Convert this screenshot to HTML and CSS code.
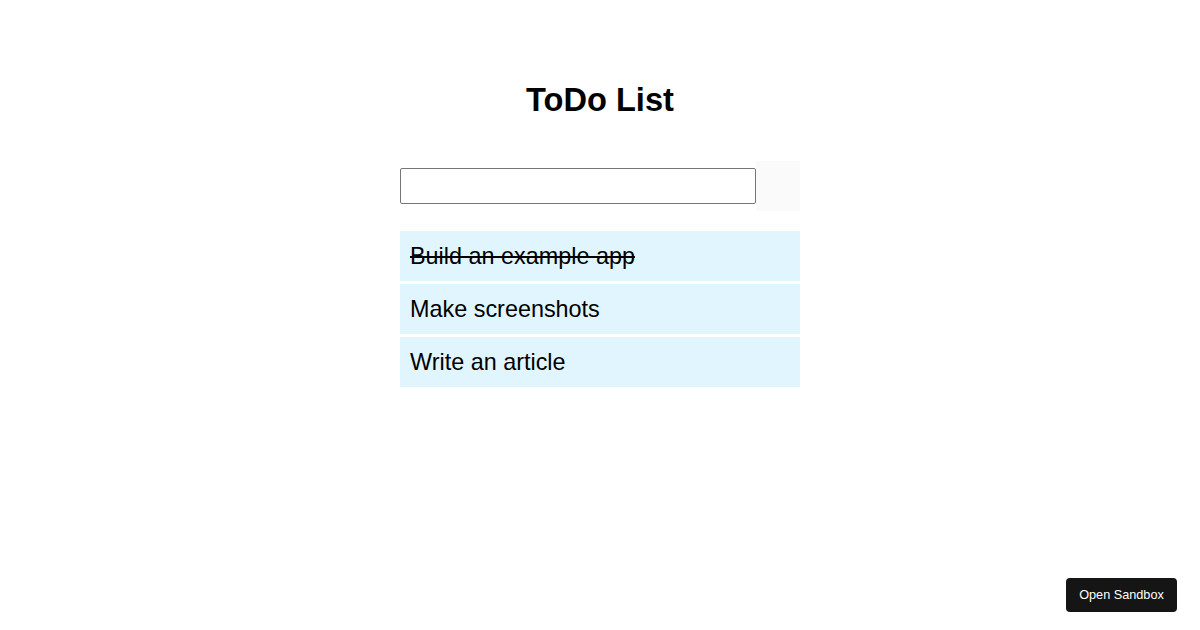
FILE: index.html
```html
<!DOCTYPE html>
<html>
<head>
<meta charset="utf-8">
<link rel="stylesheet" href="styles.css">
</head>
<body>
<div class="app">
  <h1 class="title">ToDo List</h1>
  <form class="add-form">
    <input class="add-input" type="text">
    <button class="add-button" type="button"></button>
  </form>
  <ul class="todo-list">
    <li class="todo-item done">Build an example app</li>
    <li class="todo-item">Make screenshots</li>
    <li class="todo-item">Write an article</li>
  </ul>
</div>
<a class="sandbox-button">Open Sandbox</a>
</body>
</html>
```
FILE: styles.css
```css
html, body {
  margin: 0;
  padding: 0;
  background: #ffffff;
  font-family: "Liberation Sans", Arial, sans-serif;
}
.app {
  width: 400px;
  margin: 0 auto;
  padding-top: 80px;
}
.title {
  margin: 0;
  font-size: 32.6px;
  line-height: 40px;
  font-weight: bold;
  text-align: center;
  color: #000;
}
.add-form {
  display: flex;
  align-items: center;
  margin-top: 41px;
  height: 50px;
}
.add-input {
  box-sizing: border-box;
  width: 356px;
  height: 36px;
  margin: 0;
  border: 1px solid #767676;
  border-radius: 2px;
  padding: 1px 2px;
  font-size: 16px;
}
.add-button {
  width: 44px;
  height: 50px;
  margin: 0;
  padding: 0;
  border: none;
  background: #fafafa;
}
.todo-list {
  list-style: none;
  margin: 20px 0 0 0;
  padding: 0;
  display: flex;
  flex-direction: column;
  gap: 3px;
}
.todo-item {
  height: 50px;
  box-sizing: border-box;
  padding: 0 10px;
  display: flex;
  align-items: center;
  background: #e1f5fe;
  font-size: 23.4px;
  color: #000;
}
.todo-item.done {
  text-decoration: line-through;
}
.sandbox-button {
  position: fixed;
  right: 23px;
  bottom: 18px;
  width: 111px;
  height: 34px;
  box-sizing: border-box;
  padding-bottom: 1px;
  display: flex;
  align-items: center;
  justify-content: center;
  background: #151515;
  color: #ffffff;
  border-radius: 4px;
  font-size: 12.7px;
  font-family: "Liberation Sans", Arial, sans-serif;
}
```
